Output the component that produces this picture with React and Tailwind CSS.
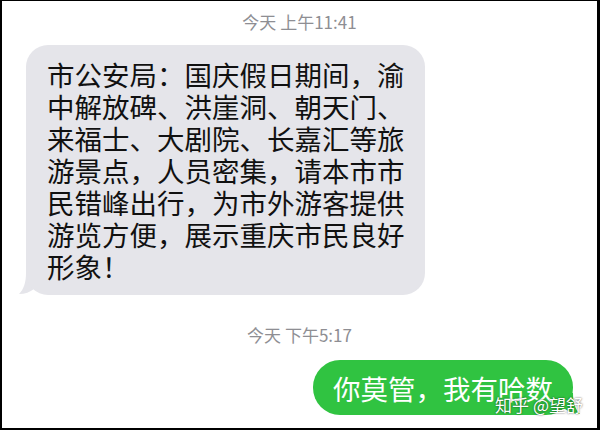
const FONT = "font-['Noto_Sans_CJK_SC','Noto_Sans',sans-serif]";

const LINES = [
  '市公安局：国庆假日期间，渝',
  '中解放碑、洪崖洞、朝天门、',
  '来福士、大剧院、长嘉汇等旅',
  '游景点，人员密集，请本市市',
  '民错峰出行，为市外游客提供',
  '游览方便，展示重庆市民良好',
  '形象！',
];

function Stamp({ children }) {
  return (
    <div className="text-center text-[17px] leading-[20px] text-[#8e8e93]">{children}</div>
  );
}

export default function App() {
  return (
    <div
      className={`${FONT} relative w-[600px] h-[430px] overflow-hidden bg-white border-t border-b-2 border-l-2 border-r-[3px] border-black flex flex-col`}
    >
      <div className="mt-[11px]">
        <Stamp>今天 上午11:41</Stamp>
      </div>

      {/* incoming */}
      <div className="mt-[13px] ml-[24px] self-start relative">
        <svg className="absolute left-[-8px] bottom-0" width="24" height="22" viewBox="0 0 24 22">
          <path d="M8 0 C8 9 6 16 1 21 C7 21 12 19 16 16 L24 16 L24 0 Z" fill="#e5e5ea" />
        </svg>
        <div className="relative bg-[#e5e5ea] rounded-[22px] pl-[21px] pr-[20px] pt-[13px] pb-[13px] text-[27.5px] leading-[32px] text-[#111]">
          {LINES.map((l) => (
            <div key={l} className="whitespace-nowrap">{l}</div>
          ))}
        </div>
      </div>

      <div className="mt-[30px]">
        <Stamp>今天 下午5:17</Stamp>
      </div>

      {/* outgoing */}
      <div className="mt-[15px] mr-[24px] self-end relative">
        <svg className="absolute right-[-8px] bottom-0" width="24" height="22" viewBox="0 0 24 22">
          <path d="M16 0 C16 9 18 16 23 21 C17 21 12 19 8 16 L0 16 L0 0 Z" fill="#30c341" />
        </svg>
        <div className="relative h-[55px] flex items-center bg-[#30c341] rounded-[27px] px-[20px] text-[27.5px] leading-[32px] text-white whitespace-nowrap">
          你莫管，我有哈数
        </div>
      </div>

      <div className="absolute right-[14px] bottom-[13px] text-[17px] leading-[20px] text-white [text-shadow:0_0_2px_rgba(0,0,0,0.7)]">
        知乎 @望舒
      </div>
    </div>
  );
}
